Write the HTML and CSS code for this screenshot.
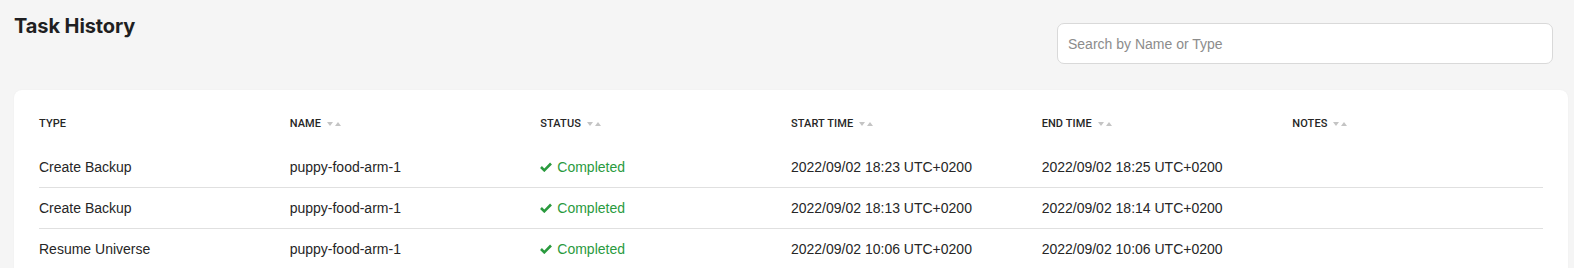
FILE: index.html
```html
<!DOCTYPE html>
<html>
<head>
<meta charset="utf-8">
<link rel="stylesheet" href="styles.css">
</head>
<body>
<div class="page">
  <div class="header">
    <h1 class="title">Task History</h1>
    <input class="search" type="text" placeholder="Search by Name or Type">
  </div>
  <div class="card">
    <table class="tasks">
      <thead>
        <tr>
          <th>TYPE</th>
          <th>NAME<svg class="sort" width="15" height="6" viewBox="0 0 15 6"><polygon points="0,1 6,1 3,5"/><polygon points="8,5 14,5 11,1"/></svg></th>
          <th>STATUS<svg class="sort" width="15" height="6" viewBox="0 0 15 6"><polygon points="0,1 6,1 3,5"/><polygon points="8,5 14,5 11,1"/></svg></th>
          <th>START TIME<svg class="sort" width="15" height="6" viewBox="0 0 15 6"><polygon points="0,1 6,1 3,5"/><polygon points="8,5 14,5 11,1"/></svg></th>
          <th>END TIME<svg class="sort" width="15" height="6" viewBox="0 0 15 6"><polygon points="0,1 6,1 3,5"/><polygon points="8,5 14,5 11,1"/></svg></th>
          <th>NOTES<svg class="sort" width="15" height="6" viewBox="0 0 15 6"><polygon points="0,1 6,1 3,5"/><polygon points="8,5 14,5 11,1"/></svg></th>
        </tr>
      </thead>
      <tbody>
        <tr>
          <td>Create Backup</td>
          <td>puppy-food-arm-1</td>
          <td><span class="ok"><svg class="check" width="12" height="10" viewBox="0 0 12 10"><path d="M1 5 L4.3 8.3 L11 1.5" /></svg>Completed</span></td>
          <td>2022/09/02 18:23 UTC+0200</td>
          <td>2022/09/02 18:25 UTC+0200</td>
          <td></td>
        </tr>
        <tr>
          <td>Create Backup</td>
          <td>puppy-food-arm-1</td>
          <td><span class="ok"><svg class="check" width="12" height="10" viewBox="0 0 12 10"><path d="M1 5 L4.3 8.3 L11 1.5" /></svg>Completed</span></td>
          <td>2022/09/02 18:13 UTC+0200</td>
          <td>2022/09/02 18:14 UTC+0200</td>
          <td></td>
        </tr>
        <tr>
          <td>Resume Universe</td>
          <td>puppy-food-arm-1</td>
          <td><span class="ok"><svg class="check" width="12" height="10" viewBox="0 0 12 10"><path d="M1 5 L4.3 8.3 L11 1.5" /></svg>Completed</span></td>
          <td>2022/09/02 10:06 UTC+0200</td>
          <td>2022/09/02 10:06 UTC+0200</td>
          <td></td>
        </tr>
      </tbody>
    </table>
  </div>
</div>
</body>
</html>
```

FILE: styles.css
```css
html, body {
  margin: 0;
  padding: 0;
  background: #f5f5f5;
  font-family: "Liberation Sans", Arial, sans-serif;
  color: #232323;
}

.page {
  padding: 0 6px 0 14px;
}

.header {
  display: flex;
  justify-content: space-between;
  align-items: flex-start;
  height: 90px;
}

.title {
  margin: 14px 0 0 0;
  font-family: Inter, "Liberation Sans", sans-serif;
  font-size: 20px;
  line-height: 24px;
  font-weight: 700;
  color: #1f1f22;
  letter-spacing: -0.1px;
}

.search {
  box-sizing: border-box;
  margin: 23px 15px 0 0;
  width: 496px;
  height: 41px;
  border: 1px solid #d9d9d9;
  border-radius: 7px;
  background: #fff;
  padding: 0 10px;
  font-family: "Liberation Sans", Arial, sans-serif;
  font-size: 14px;
  color: #333;
  outline: none;
}

.search::placeholder {
  color: #8c8c8c;
}

.card {
  background: #fff;
  border-radius: 8px;
  padding: 13px 25px 20px 25px;
  box-shadow: 0 0 2px rgba(0, 0, 0, 0.04);
}

.tasks {
  width: 100%;
  border-collapse: collapse;
  table-layout: fixed;
}

.tasks th {
  text-align: left;
  font-family: Roboto, "Liberation Sans", sans-serif;
  font-size: 11px;
  font-weight: 500;
  color: #262626;
  height: 40px;
  padding: 0 0 4px 0;
  vertical-align: middle;
  letter-spacing: 0.1px;
}

.sort {
  margin-left: 6px;
  fill: #c4c4c4;
  vertical-align: 0px;
}

.tasks td {
  font-size: 14px;
  color: #262626;
  height: 40px;
  padding: 0;
  vertical-align: middle;
  border-bottom: 1px solid #e0e0e0;
  white-space: nowrap;
}

.ok {
  color: #2a9a3e;
  display: inline-flex;
  align-items: center;
}

.check {
  margin-right: 5px;
  fill: none;
  stroke: #2a9a3e;
  stroke-width: 2.6;
  stroke-linecap: butt;
}
```
